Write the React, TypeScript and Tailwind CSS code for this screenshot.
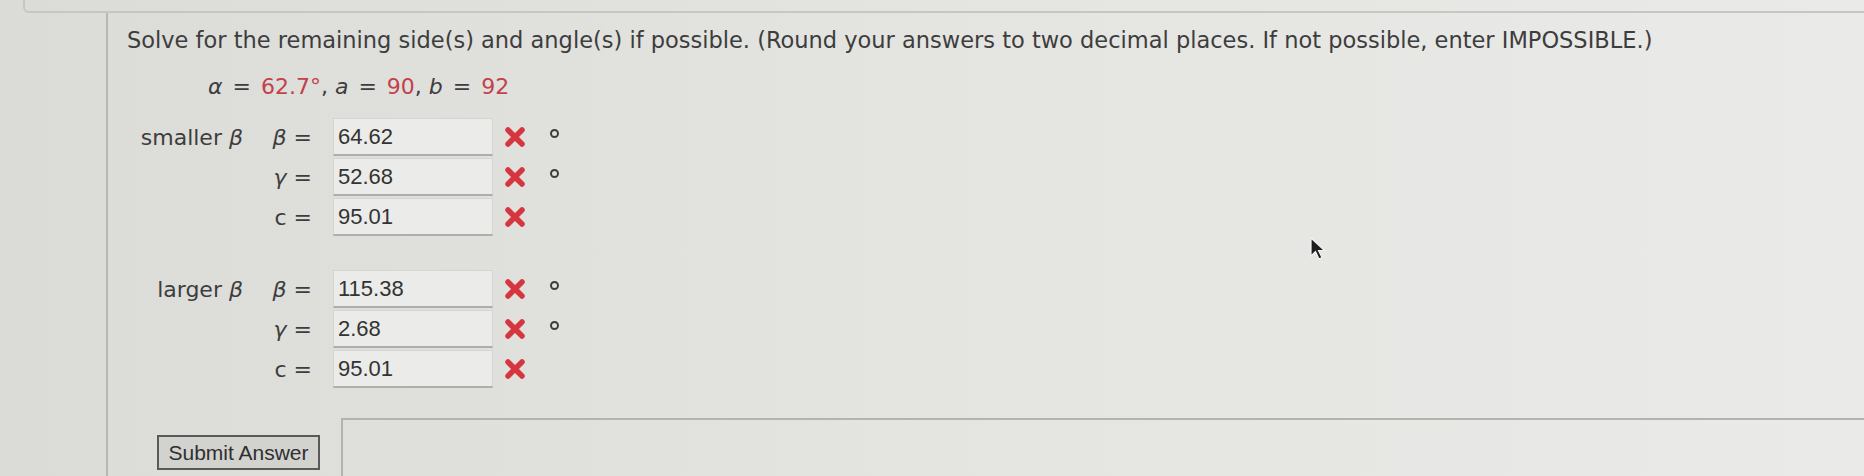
import React from 'react'

type Row = { sym: string; italic: boolean; value: string; degree: boolean }

const smallerRows: Row[] = [
  { sym: 'β', italic: true, value: '64.62', degree: true },
  { sym: 'γ', italic: true, value: '52.68', degree: true },
  { sym: 'c', italic: false, value: '95.01', degree: false },
]

const largerRows: Row[] = [
  { sym: 'β', italic: true, value: '115.38', degree: true },
  { sym: 'γ', italic: true, value: '2.68', degree: true },
  { sym: 'c', italic: false, value: '95.01', degree: false },
]

function WrongMark() {
  return (
    <svg width="22" height="22" viewBox="0 0 22 22" className="shrink-0">
      <path d="M4 4 L18 18 M18 4 L4 18" stroke="#d6363f" strokeWidth="5.5" strokeLinecap="round" />
    </svg>
  )
}

function AnswerRow({ label, row }: { label?: string; row: Row }) {
  return (
    <div className="flex items-center h-[40px]">
      <div className="w-[118px] pr-[2px] text-right text-[22px] whitespace-nowrap">
        {label && (
          <>
            {label} <span className="italic">β</span>
          </>
        )}
      </div>
      <div className="w-[67px] text-right text-[22px] whitespace-nowrap">
        <span className={row.italic ? 'italic' : ''}>{row.sym}</span>
        <span className="ml-[7px]">=</span>
      </div>
      <div className="ml-[21px] w-[160px] h-[38px] flex items-center pl-[4px] bg-[#ebebe9] border border-[#d4d4d1] border-b-2 border-b-[#aeaeab] font-['Liberation_Sans',Arial,sans-serif] text-[22px] text-[#333]">
        {row.value}
      </div>
      <div className="ml-[11px]">
        <WrongMark />
      </div>
      {row.degree && <div className="ml-[24px] -mt-[7px] w-[9px] h-[9px] rounded-full border-2 border-[#3d3d3d]" />}
    </div>
  )
}

export default function App() {
  return (
    <div className="relative w-[1864px] h-[476px] overflow-hidden bg-gradient-to-r from-[#dbdbd8] via-[#e4e4e1] to-[#eaeae8] text-[#3d3d3d] font-['DejaVu_Sans',Verdana,sans-serif]">
      {/* top edge of the previous panel */}
      <div className="ml-[23px] h-[13px] border-b-2 border-l-2 rounded-bl-[6px] border-[#c6c6c3]" />

      <div className="ml-[106px] h-[463px] border-l-2 border-[#b7b7b4] pl-[19px] pt-[14px] flex flex-col">
        <p className="text-[22.5px] leading-[27px] whitespace-nowrap">
          Solve for the remaining side(s) and angle(s) if possible. (Round your answers to two decimal places. If not possible, enter IMPOSSIBLE.)
        </p>

        <p className="mt-[19px] pl-[81px] text-[22px] leading-[27px] whitespace-nowrap">
          <span className="italic">α</span>
          <span className="mx-[10px]">=</span>
          <span className="text-[#c2414a]">62.7°</span>, <span className="italic">a</span>
          <span className="mx-[10px]">=</span>
          <span className="text-[#c2414a]">90</span>, <span className="italic">b</span>
          <span className="mx-[10px]">=</span>
          <span className="text-[#c2414a]">92</span>
        </p>

        <div className="mt-[17px]">
          {smallerRows.map((r, i) => (
            <AnswerRow key={'s' + i} label={i === 0 ? 'smaller' : undefined} row={r} />
          ))}
        </div>

        <div className="mt-[32px]">
          {largerRows.map((r, i) => (
            <AnswerRow key={'l' + i} label={i === 0 ? 'larger' : undefined} row={r} />
          ))}
        </div>

        <div className="mt-[29px] flex items-start">
          <button className="ml-[30px] mt-[17px] w-[163px] h-[35px] shrink-0 bg-[#d2d2cf] border-2 border-[#595959] font-['Liberation_Sans',Arial,sans-serif] text-[21px] text-[#2f2f2f]">
            Submit Answer
          </button>
          <div className="ml-[21px] flex-1 h-[80px] border-t-2 border-l-2 border-[#b3b3b0]" />
        </div>
      </div>

      {/* mouse pointer */}
      <svg className="absolute left-[1309px] top-[236px]" width="18" height="26" viewBox="0 0 18 26">
        <path d="M2 2 L2 20 L6.5 15.5 L10 23 L13 21.5 L9.5 14.5 L15.5 14.5 Z" fill="#1e1e1e" stroke="#f4f4f4" strokeWidth="1.2" />
      </svg>
    </div>
  )
}
